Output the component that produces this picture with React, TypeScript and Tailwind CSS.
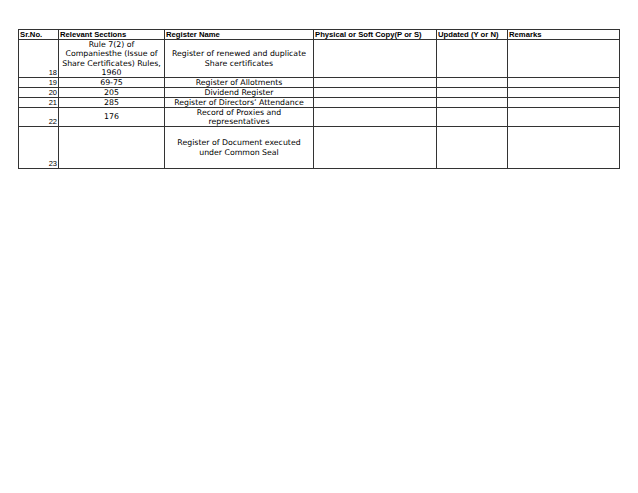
const rows = [
  {
    no: '18',
    section: ['Rule 7(2) of', 'Companiesthe (Issue of', 'Share Certificates) Rules,', '1960'],
    name: ['Register of renewed and duplicate', 'Share certificates'],
    h: 'h-[37px]',
  },
  { no: '19', section: ['69-75'], name: ['Register of Allotments'], h: 'h-[9px]' },
  { no: '20', section: ['205'], name: ['Dividend Register'], h: 'h-[9px]' },
  { no: '21', section: ['285'], name: ['Register of Directors’ Attendance'], h: 'h-[9px]' },
  { no: '22', section: ['176'], name: ['Record of Proxies and', 'representatives'], h: 'h-[18px]' },
  { no: '23', section: [], name: ['Register of Document executed', 'under Common Seal'], h: 'h-[41px]' },
]

const cell = 'border border-[#333] p-0'
const body = "font-['DejaVu_Sans',Verdana,sans-serif] text-[7.8px] leading-[9.5px] text-center text-black"

function Lines({ lines, h }: { lines: string[]; h: string }) {
  return (
    <div className={`${h} flex flex-col justify-center items-center overflow-visible ${body}`}>
      {lines.map((l) => (
        <div key={l} className="whitespace-nowrap h-[9.5px] shrink-0">{l}</div>
      ))}
    </div>
  )
}

export default function App() {
  return (
    <div className="w-[638px] h-[493px] bg-white pt-[29px] pl-[18px]">
      <table className="table-fixed border-collapse w-[601px] font-['Liberation_Sans',Arial,sans-serif] text-black">
        <colgroup>
          <col className="w-[40px]" />
          <col className="w-[106px]" />
          <col className="w-[149px]" />
          <col className="w-[123px]" />
          <col className="w-[71px]" />
          <col className="w-[112px]" />
        </colgroup>
        <thead>
          <tr>
            {['Sr.No.', 'Relevant Sections', 'Register Name', 'Physical or Soft Copy(P or S)', 'Updated (Y or N)', 'Remarks'].map((t) => (
              <th key={t} className={`${cell} text-left align-bottom font-bold text-[7.7px] leading-[9px] h-[9px] pl-[1px] whitespace-nowrap`}>
                <div className="h-[9px] overflow-visible">{t}</div>
              </th>
            ))}
          </tr>
        </thead>
        <tbody>
          {rows.map((r) => (
            <tr key={r.no}>
              <td className={`${cell} text-right align-bottom text-[7.5px] pr-[1px]`}>
                <div className={`${r.h} flex items-end justify-end leading-[8px]`}>{r.no}</div>
              </td>
              <td className={cell}>
                <Lines lines={r.section} h={r.h} />
              </td>
              <td className={cell}>
                <Lines lines={r.name} h={r.h} />
              </td>
              <td className={cell} />
              <td className={cell} />
              <td className={cell} />
            </tr>
          ))}
        </tbody>
      </table>
    </div>
  )
}
